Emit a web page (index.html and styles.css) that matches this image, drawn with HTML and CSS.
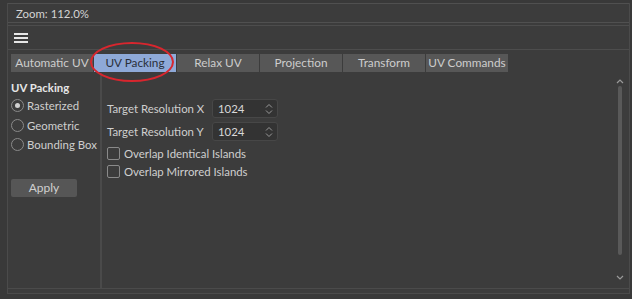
FILE: index.html
```html
<!DOCTYPE html>
<html>
<head>
<meta charset="utf-8">
<link rel="stylesheet" href="styles.css">
</head>
<body>
<div class="frame">
  <div class="zoombar">Zoom: 112.0%</div>
  <div class="toolbar">
    <svg class="burger" width="14" height="10" viewBox="0 0 14 10"><rect x="0" y="0" width="14" height="2" fill="#e6e6e6"/><rect x="0" y="4" width="14" height="2" fill="#e6e6e6"/><rect x="0" y="8" width="14" height="2" fill="#e6e6e6"/></svg>
  </div>
  <div class="tabs">
    <div class="tab">Automatic UV</div>
    <div class="tab active">UV Packing<span class="ring"></span></div>
    <div class="tab">Relax UV</div>
    <div class="tab">Projection</div>
    <div class="tab">Transform</div>
    <div class="tab">UV Commands</div>
  </div>
  <div class="panel">
    <div class="left">
      <div class="title">UV Packing</div>
      <label class="radio"><span class="circle on"></span>Rasterized</label>
      <label class="radio"><span class="circle"></span>Geometric</label>
      <label class="radio"><span class="circle"></span>Bounding Box</label>
      <div class="btn">Apply</div>
    </div>
    <div class="right">
      <div class="field"><span class="lbl">Target Resolution X</span><span class="input">1024<svg class="spin" width="8" height="12" viewBox="0 0 8 12"><path d="M1 4.5 L4 1.5 L7 4.5 M1 7.5 L4 10.5 L7 7.5" fill="none" stroke="#9a9a9a" stroke-width="1"/></svg></span></div>
      <div class="field"><span class="lbl">Target Resolution Y</span><span class="input">1024<svg class="spin" width="8" height="12" viewBox="0 0 8 12"><path d="M1 4.5 L4 1.5 L7 4.5 M1 7.5 L4 10.5 L7 7.5" fill="none" stroke="#9a9a9a" stroke-width="1"/></svg></span></div>
      <label class="check first"><span class="box"></span>Overlap Identical Islands</label>
      <label class="check"><span class="box"></span>Overlap Mirrored Islands</label>
    </div>
    <div class="scroll">
      <svg width="8" height="6" viewBox="0 0 8 6"><path d="M1 5 L4 2 L7 5" fill="none" stroke="#9a9a9a" stroke-width="1.2"/></svg>
      <div class="thumb"></div>
      <svg width="8" height="6" viewBox="0 0 8 6"><path d="M1 1 L4 4 L7 1" fill="none" stroke="#9a9a9a" stroke-width="1.2"/></svg>
    </div>
  </div>
</div>
</body>
</html>
```
FILE: styles.css
```css
* { box-sizing: border-box; }
html, body { margin: 0; padding: 0; }
body {
  width: 632px; height: 299px; overflow: hidden;
  background: #393939;
  font-family: "Lato", "Noto Sans", sans-serif;
  font-size: 11.4px;
  color: #cfcfcf;
}
.frame {
  margin-left: 7px;
  width: 623px;
  height: 291px;
  margin-top: 3px;
  border-left: 1px solid #4b4b4b;
  border-right: 1px solid #4b4b4b;
  border-bottom: 1px solid #4b4b4b;
  background: #3c3c3c;
  display: flex; flex-direction: column;
}
.zoombar {
  height: 20px;
  border-top: 1px solid #505050;
  border-bottom: 1px solid #505050;
  padding: 1px 0 0 8px;
  line-height: 18px;
  color: #d4d4d4;
  white-space: nowrap;
}
.toolbar {
  margin-top: 2px;
  height: 25px;
  border-top: 1px solid #4d4d4d;
  border-bottom: 1px solid #4d4d4d;
  padding: 7px 0 0 6px;
}
.burger { display: block; }
.tabs {
  display: flex; gap: 1px;
  margin: 4px 0 0 3px;
  height: 18px;
}
.tab {
  position: relative;
  width: 82px; height: 18px;
  background: #575757;
  color: #cdcdcd;
  text-align: center;
  line-height: 18px;
  white-space: nowrap;
  font-size: 11.8px;
}
.tab.active { background: #8ea9d8; color: #2a2f3a; }
.ring {
  position: absolute;
  left: -4px; top: -12px;
  width: 84px; height: 40px;
  border: 2px solid #d8262e;
  border-radius: 50%;
}
.panel {
  flex: 1;
  display: flex;
  margin-top: 1px;
  border-bottom: 1px solid #4b4b4b;
  margin-bottom: 4px;
}
.left {
  width: 94px;
  border-right: 2px solid #4a4a4a;
  padding: 7px 0 0 3px;
  display: flex; flex-direction: column;
  white-space: nowrap;
}
.title { font-weight: bold; color: #e6e6e6; height: 15px; line-height: 15px; margin-bottom: 1px; }
.radio { display: flex; align-items: center; height: 19.5px; }
.circle {
  width: 13px; height: 13px; border-radius: 50%;
  border: 1px solid #8a8a8a; margin-right: 3px;
  display: flex; align-items: center; justify-content: center;
  flex: none;
}
.circle.on::after { content: ""; width: 5px; height: 5px; border-radius: 50%; background: #d0d0d0; }
.btn {
  margin-top: 24px;
  width: 66px; height: 18px;
  background: #565656; border-radius: 2px;
  text-align: center; line-height: 18px; color: #d0d0d0;
  font-size: 12px;
}
.right {
  flex: 1;
  padding: 24px 0 0 5px;
  display: flex; flex-direction: column;
  white-space: nowrap;
}
.field { display: flex; align-items: center; height: 23px; }
.lbl { width: 105px; }
.input {
  position: relative;
  width: 66px; height: 19px;
  background: #333333;
  border: 1px solid #474747;
  border-radius: 3px;
  padding-left: 5px; line-height: 17px; color: #d8d8d8;
}
.spin { position: absolute; right: 4px; top: 3px; }
.check { display: flex; align-items: center; height: 18px; }
.check.first { margin-top: 1px; }
.box { width: 13px; height: 13px; border: 1px solid #8a8a8a; border-radius: 2px; margin-right: 4px; flex: none; }
.scroll {
  width: 14px;
  display: flex; flex-direction: column; align-items: center;
  padding: 5px 0 7px;
  margin-right: 2px;
}
.thumb { width: 4px; flex: 1; background: #595959; margin: 2px 0 20px; border-radius: 2px; }
```
